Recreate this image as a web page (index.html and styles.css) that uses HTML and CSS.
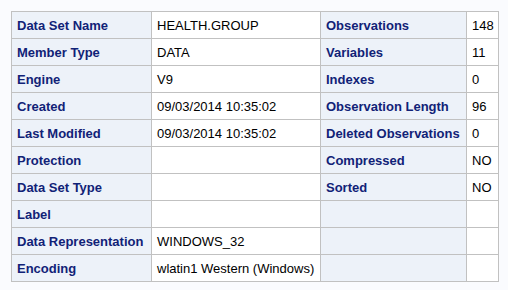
FILE: index.html
```html
<!DOCTYPE html>
<html>
<head>
<meta charset="utf-8">
<link rel="stylesheet" href="styles.css">
</head>
<body>
<div class="page">
<table class="info">
<colgroup><col class="c1"><col class="c2"><col class="c3"><col class="c4"></colgroup>
<tbody>
<tr><th>Data Set Name</th><td>HEALTH.GROUP</td><th>Observations</th><td>148</td></tr>
<tr><th>Member Type</th><td>DATA</td><th>Variables</th><td>11</td></tr>
<tr><th>Engine</th><td>V9</td><th>Indexes</th><td>0</td></tr>
<tr><th>Created</th><td>09/03/2014 10:35:02</td><th>Observation Length</th><td>96</td></tr>
<tr><th>Last Modified</th><td>09/03/2014 10:35:02</td><th>Deleted Observations</th><td>0</td></tr>
<tr><th>Protection</th><td></td><th>Compressed</th><td>NO</td></tr>
<tr><th>Data Set Type</th><td></td><th>Sorted</th><td>NO</td></tr>
<tr><th>Label</th><td></td><th></th><td></td></tr>
<tr><th>Data Representation</th><td>WINDOWS_32</td><th></th><td></td></tr>
<tr><th>Encoding</th><td>wlatin1 Western (Windows)</td><th></th><td></td></tr>
</tbody>
</table>
</div>
</body>
</html>
```
FILE: styles.css
```css
html, body {
  margin: 0;
  padding: 0;
  background: #fafbfe;
}
.page {
  padding: 11px;
}
.info {
  border-collapse: collapse;
  table-layout: fixed;
  width: 487px;
  font-family: "Liberation Sans", Arial, sans-serif;
  font-size: 13px;
}
.c1 { width: 140px; }
.c2 { width: 169px; }
.c3 { width: 146px; }
.c4 { width: 32px; }
.info th, .info td {
  border: 1px solid #c1c1c1;
  height: 27px;
  padding: 1px 0 0 5px;
  text-align: left;
  white-space: nowrap;
  box-sizing: border-box;
  vertical-align: middle;
}
.info th {
  background: #edf2f9;
  color: #112277;
  font-weight: bold;
}
.info td {
  background: #ffffff;
  color: #000000;
}
```
